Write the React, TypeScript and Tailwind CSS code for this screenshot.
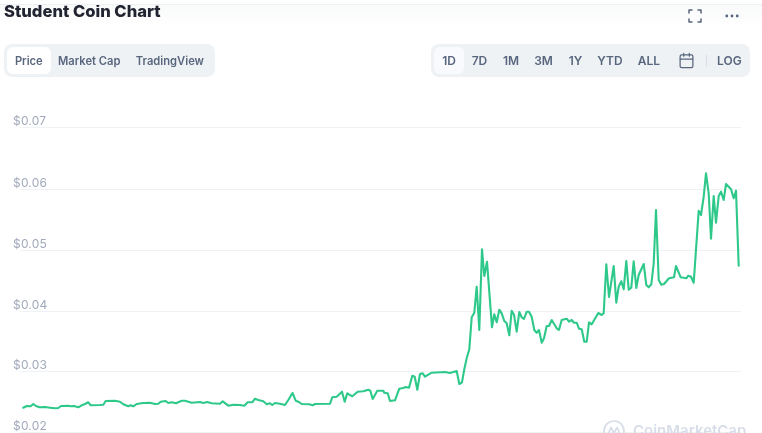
import { Calendar } from "lucide-react";

const PTS = "23.3,407.7 26.7,406 30.7,406.3 33.3,404 36,406 39.3,407.3 45,407 50,407.7 55,408.3 58.3,408 61,406 68.3,405.7 70.7,406.3 74,406 78.3,407.3 81.7,405.3 85,404 88.3,402.3 90.7,405.3 100,405 103.3,404.7 105.7,401 115,400.7 120,401.7 123.3,404.3 128.3,406.3 130.7,405.3 133.3,406.3 136.7,404 143.3,403 150,402.7 155,404 158.3,403.7 160.7,401.7 165.7,401 168.3,403 171.7,402.3 176,403.3 181.7,400.7 185,400.7 191.7,402.7 200,402 203.3,403 207.3,402 211.7,403.3 220,403.7 222.7,401.3 228.3,405.7 233.3,404.7 240,405 244.3,405.7 247.7,402.3 252.3,402.3 255,398.7 258.3,400 263.3,401.3 266.7,404.3 270,403.3 272.3,405 275,403 280,403.7 285,405 288.3,400 292.5,393 295.7,400.7 298.3,401.7 301.7,404 309.3,404.3 312.7,405.3 315,404 330,403.7 332.3,397.3 336.7,396.7 342,391.7 344.7,401.7 347.3,393.3 352.3,396.3 357.7,391.7 363.3,391.3 368.3,389.7 370.3,390.7 372.7,399 377.3,390.7 383.3,390.7 384.3,392.7 387.7,393.3 390,401 395,400.3 399.3,388.7 403.3,388 405.7,387 409,387.7 412.3,375.7 414.7,376.7 417.3,389.7 420,374 422.7,373.3 425,376.7 431.7,372.7 445,372 450,373 456.7,371 459.3,384 462,382.3 464.3,369.3 466.7,358.3 469.3,349.3 471.7,317.3 474.3,312.7 476.7,286.7 479.3,330 482,249.3 484.3,276 487,261.7 492,327.3 494.3,314.3 496.7,322.3 499.3,309.7 501.7,313.3 504.3,321 506.7,323.3 509.3,335.3 511.7,310.7 514,314.7 516.7,331.7 519.3,312 521.7,317.3 524,319 526.7,311.7 529,311.7 531.7,316.7 534.3,330 536.7,332.7 539,330 541.7,342.7 544,338.3 546.7,326 549,326 551.7,320 556.7,328.3 559,330 561.7,320 566.7,318.7 569,321.7 571.7,320 574,322.7 576.7,322.7 579,328.7 581.7,329.3 584.3,341.7 586.7,341.7 589,322.3 591.7,324.3 598.3,313 601.7,315 603.7,313.3 606.3,264.3 609,297 613.7,266 616.3,302.7 618.7,286.7 621.3,281.3 623.7,289.3 626.3,261 628.7,289.7 631.3,287.7 633.7,261.3 636.3,288 638.7,275 643.7,264 646.3,285 648.7,287.3 651.3,284.3 653.7,263.3 656,210 658.7,280 661.3,284.7 664,284 669,278.3 674,277.3 676,266 680.7,277.3 686.3,278.3 688.3,275.7 691,276.7 693.7,282.7 698.7,210.7 701,215 703.7,196.7 706,173.3 708.7,193.3 711,238.7 713.7,196 716,222.7 718.7,196 721,191.7 723.7,200 726,184 731,189.3 733.7,198.3 736,190.7 738.7,265.7";

const LABELS = [
  { t: "$0.06", h: "h-[62px]" },
  { t: "$0.05", h: "h-[61px]" },
  { t: "$0.04", h: "h-[61px]" },
  { t: "$0.03", h: "h-[60px]" },
  { t: "$0.02", h: "h-[61px]" },
];

const RANGES = [
  { t: "1D", w: "w-[30px]", active: true },
  { t: "7D", w: "w-[31px]" },
  { t: "1M", w: "w-[32px]" },
  { t: "3M", w: "w-[33px]" },
  { t: "1Y", w: "w-[31px]" },
  { t: "YTD", w: "w-[38px]" },
  { t: "ALL", w: "w-[40px]" },
];

function GridRow({ t, h }: { t: string; h: string }) {
  return (
    <div className={`${h} ml-5 w-[721px] border-b border-[#eff2f5] flex items-end`}>
      <span className="-ml-[7px] -mb-px text-[12px] leading-[15px] tracking-[0.2px] text-[#a1a9bb]">{t}</span>
    </div>
  );
}

export default function App() {
  return (
    <div
      className="relative w-[762px] h-[433px] overflow-hidden bg-white blur-[0.35px]"
      style={{ fontFamily: "Inter, 'Liberation Sans', sans-serif" }}
    >
      <div className="absolute inset-x-0 top-0 h-[26px] bg-gradient-to-b from-[#f7f8f8] to-white" />

      <div className="relative h-[44px] pl-1 pr-[23px] flex items-start justify-between">
        <h1 className="text-[16.6px] leading-[22px] font-extrabold text-[#222531]">Student Coin Chart</h1>
        <div className="flex items-center gap-[23px] pt-[9px]">
          <svg width="14" height="14" viewBox="0 0 14 14" fill="none" stroke="#58667e" strokeWidth="1.5" strokeLinecap="round" strokeLinejoin="round">
            <path d="M1 4V1H4M10 1H13V4M13 10V13H10M4 13H1V10" />
          </svg>
          <svg width="14" height="14" viewBox="0 0 14 14" fill="#58667e">
            <circle cx="1.8" cy="7" r="1.4" />
            <circle cx="7" cy="7" r="1.4" />
            <circle cx="12.2" cy="7" r="1.4" />
          </svg>
        </div>
      </div>

      <div className="absolute inset-x-0 top-0 h-[5px] bg-white border-b border-[#eef0f2]" />

      <div className="h-[33px] pl-1 pr-3 flex justify-between">
        <div className="flex items-center rounded-lg bg-[#eff2f5] px-[3px] w-[211px] text-[11.2px] font-semibold text-[#58667e]">
          <div className="h-[27px] w-[44px] rounded-md bg-white flex items-center justify-center pt-px">Price</div>
          <div className="h-[27px] w-[78px] flex items-center justify-center pt-px">Market Cap</div>
          <div className="h-[27px] w-[85px] flex items-center justify-center pt-px">TradingView</div>
        </div>
        <div className="flex items-center rounded-lg bg-[#eff2f5] px-[3px] w-[319px] text-[12px] font-semibold text-[#58667e]">
          {RANGES.map((r) => (
            <div
              key={r.t}
              className={`${r.w} h-[27px] rounded-md flex items-center justify-center pt-px ${r.active ? "bg-[#f8fafd]" : ""}`}
            >
              {r.t}
            </div>
          ))}
          <div className="w-[34px] flex justify-center">
            <Calendar size={17} strokeWidth={1.75} />
          </div>
          <div className="h-[12px] w-px bg-[#d9dee6] ml-[3px]" />
          <div className="ml-[10px] pt-px">LOG</div>
        </div>
      </div>

      <div>
        <GridRow t="$0.07" h="h-[51px]" />
        {LABELS.map((l) => (
          <GridRow key={l.t} t={l.t} h={l.h} />
        ))}
      </div>

      <svg className="absolute inset-0" width="762" height="433" viewBox="0 0 762 433" fill="none">
        <polyline points={PTS} stroke="#2ec98a" strokeWidth="2.1" strokeLinejoin="round" strokeLinecap="round" />
      </svg>

      <div className="absolute left-[603px] top-[420px] flex items-center gap-2 text-[#d8dee9]">
        <svg width="22" height="22" viewBox="0 0 22 22" fill="none" stroke="currentColor" strokeWidth="1.7">
          <circle cx="11" cy="11" r="10" />
          <path d="M5 14L8 7.5L11 13L14 7.5L17 14" strokeLinejoin="round" />
        </svg>
        <span className="text-[15px] leading-[22px] font-semibold">CoinMarketCap</span>
      </div>
    </div>
  );
}
